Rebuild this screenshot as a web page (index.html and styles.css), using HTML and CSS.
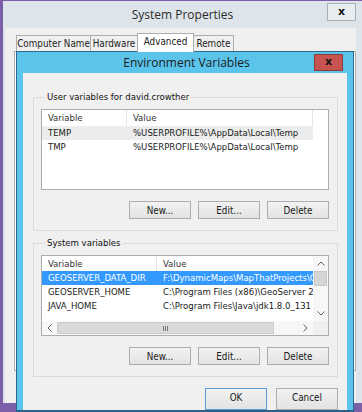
FILE: index.html
```html
<!DOCTYPE html>
<html lang="en">
<head>
    <meta charset="UTF-8">
    <title>Environment Variables</title>
    <link rel="stylesheet" href="styles.css">
</head>
<body>
    <div class="desktop">
        <div class="window sysprop">
            <div class="titlebar">
                <span class="title">System Properties</span>
                <span class="close-btn">x</span>
            </div>
            <div class="content">
                <div class="tabs">
                    <div class="tab tab-computer">Computer Name</div>
                    <div class="tab tab-hardware">Hardware</div>
                    <div class="tab tab-advanced active">Advanced</div>
                    <div class="tab tab-remote">Remote</div>
                </div>
                <div class="tab-page"></div>
            </div>
        </div>

        <div class="dialog envvars">
            <div class="titlebar">
                <span class="title">Environment Variables</span>
                <span class="close-btn red">x</span>
            </div>
            <div class="dialog-body">
                <fieldset class="group">
                    <legend>User variables for david.crowther</legend>
                    <div class="list user-list">
                        <div class="list-head">
                            <div class="cell col-var">Variable</div>
                            <div class="cell col-val">Value</div>
                            <div class="cell col-rest"></div>
                        </div>
                        <div class="row muted">
                            <div class="cell col-var">TEMP</div>
                            <div class="cell col-val">%USERPROFILE%\AppData\Local\Temp</div>
                        </div>
                        <div class="row">
                            <div class="cell col-var">TMP</div>
                            <div class="cell col-val">%USERPROFILE%\AppData\Local\Temp</div>
                        </div>
                    </div>
                    <div class="btn-row">
                        <button class="btn">New...</button>
                        <button class="btn">Edit...</button>
                        <button class="btn">Delete</button>
                    </div>
                </fieldset>

                <fieldset class="group system-group">
                    <legend>System variables</legend>
                    <div class="list sys-list">
                        <div class="sys-view">
                            <div class="list-head">
                                <div class="cell col-var wide">Variable</div>
                                <div class="cell col-val long">Value</div>
                            </div>
                            <div class="row selected">
                                <div class="cell col-var wide">GEOSERVER_DATA_DIR</div>
                                <div class="cell col-val long">F:\DynamicMaps\MapThatProjects\OSGeo\GeoServerData</div>
                            </div>
                            <div class="row">
                                <div class="cell col-var wide">GEOSERVER_HOME</div>
                                <div class="cell col-val long">C:\Program Files (x86)\GeoServer 2.11.0</div>
                            </div>
                            <div class="row">
                                <div class="cell col-var wide">JAVA_HOME</div>
                                <div class="cell col-val long">C:\Program Files\Java\jdk1.8.0_131</div>
                            </div>
                        </div>
                        <div class="vscroll">
                            <div class="arrow">
                                <svg width="8" height="5" viewBox="0 0 8 5"><polyline points="0.5,4.5 4,1 7.5,4.5" fill="none" stroke="#606060" stroke-width="1"/></svg>
                            </div>
                            <div class="vthumb"></div>
                            <div class="vtrack"></div>
                            <div class="arrow">
                                <svg width="8" height="5" viewBox="0 0 8 5"><polyline points="0.5,0.5 4,4 7.5,0.5" fill="none" stroke="#606060" stroke-width="1"/></svg>
                            </div>
                        </div>
                        <div class="hscroll">
                            <div class="arrow">
                                <svg width="5" height="8" viewBox="0 0 5 8"><polyline points="4.5,0.5 1,4 4.5,7.5" fill="none" stroke="#606060" stroke-width="1"/></svg>
                            </div>
                            <div class="hthumb"><span class="grip"></span></div>
                            <div class="htrack"></div>
                            <div class="arrow">
                                <svg width="5" height="8" viewBox="0 0 5 8"><polyline points="0.5,0.5 4,4 0.5,7.5" fill="none" stroke="#606060" stroke-width="1"/></svg>
                            </div>
                        </div>
                        <div class="corner"></div>
                    </div>
                    <div class="btn-row">
                        <button class="btn">New...</button>
                        <button class="btn">Edit...</button>
                        <button class="btn">Delete</button>
                    </div>
                </fieldset>

                <div class="btn-row footer">
                    <button class="btn default">OK</button>
                    <button class="btn">Cancel</button>
                </div>
            </div>
        </div>
    </div>
</body>
</html>
```

FILE: styles.css
```css
:root {
    --desktop: #7b5fa9;
    --frame: #dde4ea;
    --face: #f0f0f0;
    --accent: #5ac4ea;
    --border: #adadad;
    --list-border: #abadb3;
    --divider: #e5e5e5;
    --select: #3399ff;
    --ui-font: "DejaVu Sans Condensed", "Liberation Sans", Arial, sans-serif;
}

* {
    box-sizing: border-box;
}

body {
    margin: 0;
    background: var(--desktop);
    font-family: var(--ui-font);
    font-size: 9.5px;
    color: #1a1a1a;
    overflow: hidden;
}

.desktop {
    width: 362px;
    height: 412px;
    position: relative;
    overflow: hidden;
}

/* Window chrome */
.titlebar {
    position: relative;
    display: flex;
    align-items: center;
    justify-content: center;
}

.title {
    font-family: "Open Sans", "Noto Sans", sans-serif;
    font-size: 12px;
    color: #2b2b2b;
}

.close-btn {
    position: absolute;
    display: flex;
    align-items: center;
    justify-content: center;
    width: 29px;
    height: 18px;
    font-family: "DejaVu Sans", sans-serif;
    font-size: 11px;
    font-weight: bold;
    color: #111;
    line-height: 1;
    padding-bottom: 2px;
}

/* System Properties (behind) */
.sysprop {
    margin: 1px 0 0 3px;
    height: 402px;
    background: var(--frame);
    display: flex;
    flex-direction: column;
}

.sysprop .titlebar {
    height: 27px;
}

.sysprop .close-btn {
    top: 2px;
    right: 6px;
    background: #e9edf0;
    border: 1px solid #a7afb7;
}

.sysprop .content {
    flex: 1;
    background: var(--face);
    margin: 0 6px 0 2px;
    padding: 5px 0 0 9px;
}

.tabs {
    display: flex;
    align-items: flex-end;
    height: 19px;
    padding-left: 2px;
}

.tab {
    height: 17px;
    border: 1px solid var(--border);
    border-bottom: none;
    margin-left: -1px;
    background: var(--face);
    font-size: 9.8px;
    line-height: 16px;
    text-align: center;
    color: #222;
}

.tab-computer { width: 75px; margin-left: 0; }
.tab-hardware { width: 48px; }
.tab-advanced { width: 57px; }
.tab-remote { width: 41px; }

.tab.active {
    height: 19px;
    background: #fff;
    line-height: 15px;
    position: relative;
    z-index: 1;
}

.tab-page {
    height: 320px;
    margin-top: -1px;
    border: 1px solid var(--border);
    background: #fff;
}

/* Environment Variables dialog (on top) */
.envvars {
    position: absolute;
    left: 16px;
    top: 51px;
    width: 338px;
    height: 361px;
    border: 1px solid #2f6a8e;
    border-bottom: 2px solid #2f5f86;
    background: var(--accent);
    padding: 0 6px;
    display: flex;
    flex-direction: column;
}

.envvars .titlebar {
    height: 27px;
}

.envvars .title {
    color: #1b1b1b;
    padding-left: 3px;
}

.close-btn.red {
    top: 2px;
    right: 4px;
    height: 17px;
    background: #c75450;
    border: 1px solid #8e3a36;
}

.dialog-body {
    flex: 1;
    background: var(--face);
    padding: 18px 9px 0 10px;
}

.group {
    margin: 0;
    min-width: 0;
    border: 1px solid #dadada;
    padding: 6px 8px 11px 7px;
}

.group legend {
    padding: 0 2px;
    margin-left: 4px;
    line-height: 12px;
    color: #111;
}

.system-group {
    margin-top: 6px;
}

/* List views */
.list {
    height: 81px;
    border: 1px solid var(--list-border);
    background: #fff;
    overflow: hidden;
}

.list-head,
.row {
    display: flex;
    height: 14px;
    line-height: 14px;
    white-space: nowrap;
}

.list-head {
    height: 15px;
    line-height: 15px;
    color: #333;
}

.cell {
    padding-left: 6px;
    overflow: hidden;
    flex-shrink: 0;
}

.col-var { width: 85px; }
.col-val { width: 186px; }
.col-var.wide { width: 115px; }
.col-val.long { width: 260px; }

.list-head .cell {
    border-right: 1px solid var(--divider);
}

.list-head .col-rest {
    flex: 1;
    flex-shrink: 1;
    border-right: none;
}

.row.muted {
    width: 271px;
    background: #ececec;
    margin-top: 1px;
}

.row.selected {
    background: var(--select);
    color: #fff;
}

.sys-list {
    display: grid;
    grid-template-columns: 271px 15px;
    grid-template-rows: 65px 14px;
}

.sys-view {
    overflow: hidden;
}

.sys-view .row.selected {
    width: 271px;
}

.vscroll {
    display: flex;
    flex-direction: column;
    background: #f7f7f7;
}

.arrow {
    display: flex;
    align-items: center;
    justify-content: center;
    width: 15px;
    height: 15px;
    flex-shrink: 0;
}

.vthumb {
    height: 15px;
    margin: 0 1px;
    background: #d6d6d6;
    border: 1px solid #c8c8c8;
}

.vtrack {
    flex: 1;
}

.hscroll {
    display: flex;
    background: #f7f7f7;
}

.hscroll .arrow {
    height: 14px;
}

.hthumb {
    width: 217px;
    margin: 1px 0;
    background: #dadada;
    border: 1px solid #cdcdcd;
    display: flex;
    align-items: center;
    justify-content: center;
}

.grip {
    width: 5px;
    height: 5px;
    border-left: 1px solid #777;
    border-right: 1px solid #777;
    background: linear-gradient(#777, #777) center / 1px 100% no-repeat;
}

.htrack {
    flex: 1;
}

.corner {
    background: var(--face);
}

/* Buttons */
.btn-row {
    display: flex;
    justify-content: flex-end;
    gap: 7px;
    margin-top: 11px;
}

.btn {
    width: 62px;
    height: 18px;
    padding: 0;
    border: 1px solid var(--border);
    background: linear-gradient(#f2f2f2, #e3e3e3);
    font-family: var(--ui-font);
    font-size: 9.8px;
    color: #1a1a1a;
}

.btn.default {
    border-color: #5a9ad8;
}

.btn-row.footer {
    gap: 9px;
    margin-top: 11px;
}

.footer .btn {
    height: 22px;
    padding-bottom: 3px;
}
```
